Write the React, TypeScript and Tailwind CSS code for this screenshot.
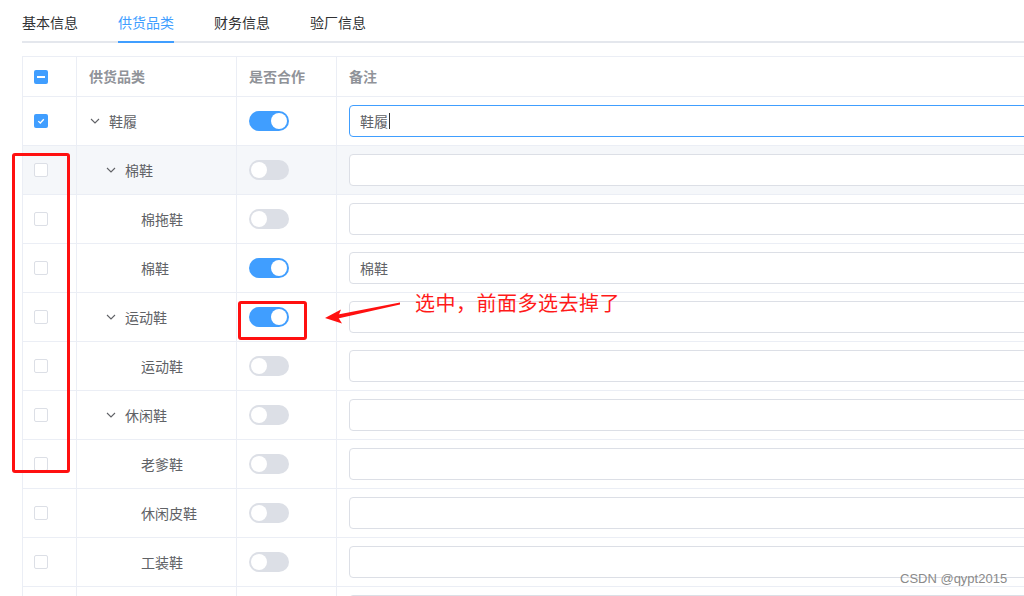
import React from "react";

type Row = {
  name: string;
  level: number;
  hasChildren: boolean;
  on: boolean;
  checked: boolean;
  note: string;
  focused?: boolean;
  hover?: boolean;
};

const rows: Row[] = [
  { name: "鞋履", level: 0, hasChildren: true, on: true, checked: true, note: "鞋履", focused: true },
  { name: "棉鞋", level: 1, hasChildren: true, on: false, checked: false, note: "", hover: true },
  { name: "棉拖鞋", level: 2, hasChildren: false, on: false, checked: false, note: "" },
  { name: "棉鞋", level: 2, hasChildren: false, on: true, checked: false, note: "棉鞋" },
  { name: "运动鞋", level: 1, hasChildren: true, on: true, checked: false, note: "" },
  { name: "运动鞋", level: 2, hasChildren: false, on: false, checked: false, note: "" },
  { name: "休闲鞋", level: 1, hasChildren: true, on: false, checked: false, note: "" },
  { name: "老爹鞋", level: 2, hasChildren: false, on: false, checked: false, note: "" },
  { name: "休闲皮鞋", level: 2, hasChildren: false, on: false, checked: false, note: "" },
  { name: "工装鞋", level: 2, hasChildren: false, on: false, checked: false, note: "" },
  { name: "", level: 2, hasChildren: false, on: false, checked: false, note: "" },
];

const indentClass = ["w-0", "w-[16px]", "w-[32px]"];

function Chevron() {
  return (
    <svg width="20" height="14" viewBox="0 0 20 14" className="shrink-0">
      <path d="M2 5 L6 9 L10 5" fill="none" stroke="#606266" strokeWidth="1.1" />
    </svg>
  );
}

function Checkbox({ state }: { state: "none" | "checked" | "indeterminate" }) {
  if (state === "none")
    return <div className="w-[14px] h-[14px] rounded-[2px] border border-[#dcdfe6] bg-white" />;
  return (
    <div className="w-[14px] h-[14px] rounded-[2px] bg-[#409eff] flex items-center justify-center">
      {state === "checked" ? (
        <svg width="10" height="10" viewBox="0 0 10 10">
          <path d="M2.3 5.1 L4.3 7 L7.8 3.2" fill="none" stroke="white" strokeWidth="1.3" />
        </svg>
      ) : (
        <div className="w-[8px] h-[2px] bg-white" />
      )}
    </div>
  );
}

function Switch({ on }: { on: boolean }) {
  return (
    <div
      className={
        "w-[40px] h-[20px] rounded-full flex items-center px-[2px] " +
        (on ? "bg-[#409eff] justify-end" : "bg-[#dcdfe6] justify-start")
      }
    >
      <div className="w-[16px] h-[16px] rounded-full bg-white" />
    </div>
  );
}

export default function App() {
  return (
    <div
      className="relative w-[1024px] h-[596px] overflow-hidden bg-white text-[14px] text-[#606266]"
      style={{ fontFamily: '"Noto Sans CJK SC", "Noto Sans", sans-serif' }}
    >
      <div className="pl-[22px]">
        {/* Tabs */}
        <div className="flex h-[43px] border-b-2 border-[#e4e7ed] w-[1100px]">
          {["基本信息", "供货品类", "财务信息", "验厂信息"].map((t, i) => (
            <div
              key={t}
              className={
                "h-[43px] -mb-[2px] flex items-center mr-[40px] leading-none " +
                (i === 1
                  ? "text-[#409eff] border-b-2 border-[#409eff]"
                  : "text-[#303133] border-b-2 border-transparent")
              }
            >
              <span className="mt-[3px]">{t}</span>
            </div>
          ))}
        </div>

        {/* Table */}
        <div className="mt-[13px] w-[1100px] border-l border-t border-[#ebeef5]">
          <div className="grid grid-cols-[54px_160px_100px_1fr] h-[40px] border-b border-[#ebeef5] text-[#909399] font-bold">
            <div className="border-r border-[#ebeef5] flex items-center pl-[11px]">
              <Checkbox state="indeterminate" />
            </div>
            <div className="border-r border-[#ebeef5] flex items-center pl-[12px]">供货品类</div>
            <div className="border-r border-[#ebeef5] flex items-center pl-[12px]">是否合作</div>
            <div className="flex items-center pl-[12px]">备注</div>
          </div>
          {rows.map((r, idx) => (
            <div
              key={idx}
              className={
                "grid grid-cols-[54px_160px_100px_1fr] h-[49px] border-b border-[#ebeef5] " +
                (r.hover ? "bg-[#f5f7fa]" : "bg-white")
              }
            >
              <div className="border-r border-[#ebeef5] flex items-center pl-[11px]">
                <Checkbox state={r.checked ? "checked" : "none"} />
              </div>
              <div className="border-r border-[#ebeef5] flex items-center pl-[12px]">
                <div className={indentClass[r.level] + " shrink-0"} />
                {r.hasChildren ? <Chevron /> : <div className="w-[20px] shrink-0" />}
                <span>{r.name}</span>
              </div>
              <div className="border-r border-[#ebeef5] flex items-center pl-[12px]">
                <Switch on={r.on} />
              </div>
              <div className="flex items-center pl-[12px]">
                <div
                  className={
                    "w-full h-[32px] rounded-[4px] bg-white flex items-center px-[10px] border " +
                    (r.focused ? "border-[#409eff]" : "border-[#dcdfe6]")
                  }
                >
                  <span>{r.note}</span>
                  {r.focused && <span className="ml-[1px] w-[1px] h-[16px] bg-[#303133]" />}
                </div>
              </div>
            </div>
          ))}
        </div>
      </div>

      {/* Annotations */}
      <div className="absolute left-[12px] top-[153px] w-[58px] h-[320px] border-[3px] border-[#ff1010] rounded-[3px]" />
      <div className="absolute left-[238px] top-[301px] w-[69px] h-[39px] border-[3px] border-[#ff1010] rounded-[3px]" />
      <svg className="absolute left-0 top-0" width="1024" height="596" viewBox="0 0 1024 596">
        <polygon points="400,302.5 400,304.5 338,318.5 338,314.5" fill="#ff1010" />
        <polygon points="325,318 341,309.5 338,317 342,323.5" fill="#ff1010" />
      </svg>
      <div className="absolute left-[415px] top-[289px] text-[20px] leading-[28px] text-[#ff1a1a] tracking-[0.5px]">
        选中，前面多选去掉了
      </div>
      <div
        className="absolute left-[900px] top-[571px] text-[13px] leading-[16px] text-[#8a8a8a]"
        style={{ fontFamily: '"Liberation Sans", Arial, sans-serif' }}
      >
        CSDN @qypt2015
      </div>
    </div>
  );
}
